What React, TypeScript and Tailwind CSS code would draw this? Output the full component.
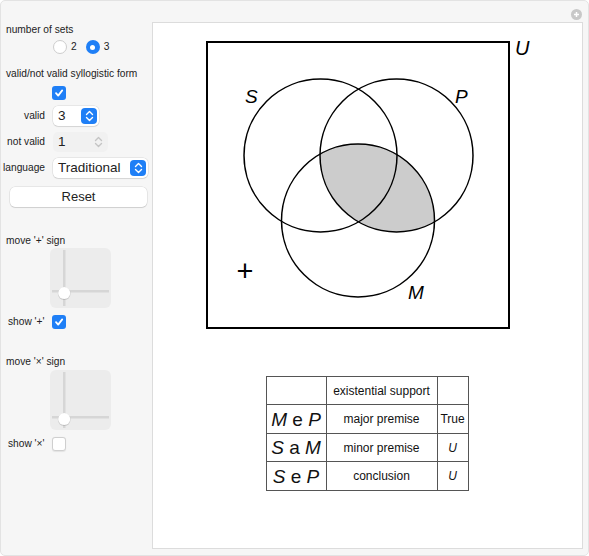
import React from "react";

const font = { fontFamily: '"Liberation Sans", Arial, sans-serif' };

const Stepper = ({ active }: { active: boolean }) => (
  <div
    className={
      "w-[16px] h-[16px] rounded-[4px] flex items-center justify-center " +
      (active ? "bg-[#1f7ff6]" : "bg-transparent")
    }
  >
    <svg width="9" height="12" viewBox="0 0 9 12" fill="none">
      <path
        d="M1.5 4.5 L4.5 1.5 L7.5 4.5 M1.5 7.5 L4.5 10.5 L7.5 7.5"
        stroke={active ? "#ffffff" : "#c4c4c4"}
        strokeWidth="1.4"
        strokeLinecap="round"
        strokeLinejoin="round"
      />
    </svg>
  </div>
);

const Checkbox = ({ checked }: { checked: boolean }) =>
  checked ? (
    <div className="w-[14px] h-[14px] rounded-[3px] bg-[#1f7ff6] flex items-center justify-center">
      <svg width="10" height="10" viewBox="0 0 10 10" fill="none">
        <path d="M2 5.2 L4.2 7.6 L8.2 2.4" stroke="#fff" strokeWidth="1.8" strokeLinecap="round" strokeLinejoin="round" />
      </svg>
    </div>
  ) : (
    <div className="w-[14px] h-[14px] rounded-[3px] bg-white border border-[#cfcfcf] shadow-[0_0.5px_1px_rgba(0,0,0,0.08)]" />
  );

const Pad = ({ lineY, knobY }: { lineY: number; knobY: number }) => (
  <svg width="61" height="60" viewBox="0 0 61 60" className="ml-[49px] block">
    <rect x="0" y="0" width="61" height="60" rx="6" fill="#ececec" />
    <rect x="13" y="2" width="2.5" height="56" fill="#d6d6d6" />
    <rect x="2" y={lineY - 1} width="57" height="2.5" fill="#d6d6d6" />
    <circle cx="14.2" cy={knobY + 0.6} r="6.4" fill="rgba(0,0,0,0.12)" />
    <circle cx="14.2" cy={knobY} r="6" fill="#ffffff" />
  </svg>
);

const Select = ({ w, value, active }: { w: string; value: string; active: boolean }) => (
  <div
    className={
      "h-[20px] rounded-[5px] bg-white flex items-center justify-between pl-[5px] pr-[2px] shadow-[0_0_0_0.5px_rgba(0,0,0,0.12),0_1px_1px_rgba(0,0,0,0.08)] " +
      w
    }
  >
    <span className="text-[13.5px] text-[#222]">{value}</span>
    <Stepper active={active} />
  </div>
);

export default function App() {
  return (
    <div
      style={font}
      className="relative w-[589px] h-[556px] bg-[#f6f6f6] border border-[#e3e3e3] rounded-[5px] flex text-[#222] overflow-hidden"
    >
      <div className="absolute right-[6px] top-[8px] w-[11px] h-[11px] rounded-full bg-[#c8c8c8] flex items-center justify-center">
        <svg width="7" height="7" viewBox="0 0 7 7">
          <path d="M3.5 1 V6 M1 3.5 H6" stroke="#fff" strokeWidth="1.5" />
        </svg>
      </div>

      {/* controls */}
      <div className="w-[151px] shrink-0 text-[10.2px] leading-[12px]">
        <div className="pt-[23px] pl-[5px]">number of sets</div>
        <div className="mt-[4px] pl-[52px] flex items-center h-[14px]">
          <div className="w-[14px] h-[14px] rounded-full bg-white border border-[#cdcdcd]" />
          <span className="ml-[4px]">2</span>
          <div className="ml-[9px] w-[14px] h-[14px] rounded-full bg-[#1f7ff6] flex items-center justify-center">
            <div className="w-[5px] h-[5px] rounded-full bg-white" />
          </div>
          <span className="ml-[4px]">3</span>
        </div>
        <div className="mt-[14px] pl-[5px]">valid/not valid syllogistic form</div>
        <div className="mt-[6px] pl-[51px]">
          <Checkbox checked />
        </div>
        <div className="mt-[6px] flex items-center">
          <span className="w-[45px] text-right pr-[1px]">valid</span>
          <div className="ml-[7px]">
            <Select w="w-[46px]" value="3" active />
          </div>
        </div>
        <div className="mt-[6px] flex items-center">
          <span className="w-[45px] text-right pr-[1px]">not valid</span>
          <div className="ml-[7px]">
            <div className="w-[55px] h-[20px] rounded-[5px] bg-[#f1f1f1] flex items-center justify-between pl-[5px] pr-[2px]">
              <span className="text-[13.5px] text-[#222]">1</span>
              <Stepper active={false} />
            </div>
          </div>
        </div>
        <div className="mt-[6px] flex items-center">
          <span className="w-[45px] text-right pr-[1px]">language</span>
          <div className="ml-[7px]">
            <Select w="w-[95px]" value="Traditional" active />
          </div>
        </div>
        <div className="mt-[9px] ml-[9px] w-[137px] h-[20px] rounded-[5px] bg-white flex items-center justify-center text-[13px] shadow-[0_0_0_0.5px_rgba(0,0,0,0.12),0_1px_1px_rgba(0,0,0,0.1)]">
          Reset
        </div>

        <div className="mt-[28px] pl-[5px]">move '+' sign</div>
        <div className="mt-[1px]">
          <Pad lineY={43} knobY={45} />
        </div>
        <div className="mt-[7px] flex items-center h-[14px]">
          <span className="pl-[7px] w-[51px]">show '+'</span>
          <Checkbox checked />
        </div>

        <div className="mt-[27px] pl-[5px]">move '×' sign</div>
        <div className="mt-[2px]">
          <Pad lineY={47} knobY={49} />
        </div>
        <div className="mt-[7px] flex items-center h-[14px]">
          <span className="pl-[7px] w-[51px]">show '×'</span>
          <Checkbox checked={false} />
        </div>
      </div>

      {/* output panel */}
      <div className="mt-[21px] mb-[6px] w-[431px] bg-white border border-[#dcdcdc]">
        <svg width="429" height="340" viewBox="153 23 429 340" className="block">
          <defs>
            <clipPath id="pclip">
              <circle cx="396.5" cy="155.5" r="76.5" />
            </clipPath>
          </defs>
          <rect x="207" y="42" width="302" height="286" fill="none" stroke="#000" strokeWidth="2" />
          <circle cx="358" cy="220.5" r="76.5" fill="#cccccc" clipPath="url(#pclip)" />
          <g fill="none" stroke="#000" strokeWidth="1.5">
            <circle cx="320.5" cy="155.5" r="76.5" />
            <circle cx="396.5" cy="155.5" r="76.5" />
            <circle cx="358" cy="220.5" r="76.5" />
          </g>
          <g fontFamily='"Liberation Sans", Arial, sans-serif' fontStyle="italic" fill="#000">
            <text x="245" y="103" fontSize="19">S</text>
            <text x="455" y="103" fontSize="19">P</text>
            <text x="408" y="299" fontSize="19">M</text>
            <text x="515" y="55" fontSize="20">U</text>
          </g>
          <text x="245" y="281" fontSize="29" textAnchor="middle" fontFamily='"Liberation Sans", Arial, sans-serif'>
            +
          </text>
        </svg>
        <div className="mt-[13px] flex justify-center pr-[1px]">
          <table className="border-collapse text-[#111]">
            <tbody>
              <tr className="h-[28px]">
                <td className="w-[60px] border border-[#555]" />
                <td className="w-[111px] border border-[#555] text-[12px] text-center">existential support</td>
                <td className="w-[31px] border border-[#555]" />
              </tr>
              <tr className="h-[29px]">
                <td className="border border-[#555] text-[19px] text-center leading-none">
                  <i>M</i> e <i>P</i>
                </td>
                <td className="border border-[#555] text-[12px] text-center">major premise</td>
                <td className="border border-[#555] text-[12px] text-center">True</td>
              </tr>
              <tr className="h-[28px]">
                <td className="border border-[#555] text-[19px] text-center leading-none">
                  <i>S</i> a <i>M</i>
                </td>
                <td className="border border-[#555] text-[12px] text-center">minor premise</td>
                <td className="border border-[#555] text-[12px] text-center italic">U</td>
              </tr>
              <tr className="h-[29px]">
                <td className="border border-[#555] text-[19px] text-center leading-none">
                  <i>S</i> e <i>P</i>
                </td>
                <td className="border border-[#555] text-[12px] text-center">conclusion</td>
                <td className="border border-[#555] text-[12px] text-center italic">U</td>
              </tr>
            </tbody>
          </table>
        </div>
      </div>
    </div>
  );
}
